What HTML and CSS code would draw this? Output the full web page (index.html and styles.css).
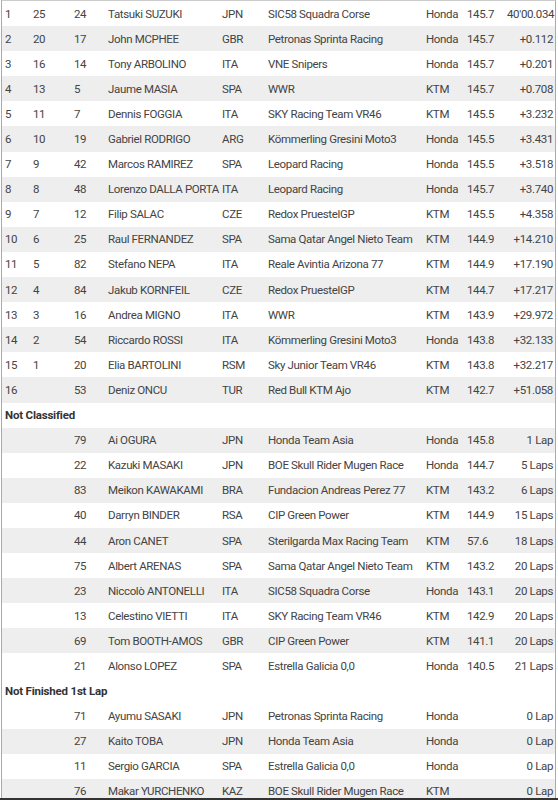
FILE: index.html
```html
<!DOCTYPE html>
<html>
<head>
<meta charset="utf-8">
<link rel="stylesheet" href="styles.css">
</head>
<body>
<div class="results">
  <div class="row"><span>1</span><span>25</span><span>24</span><span>Tatsuki SUZUKI</span><span>JPN</span><span>SIC58 Squadra Corse</span><span>Honda</span><span>145.7</span><span class="t">40'00.034</span></div>
  <div class="row"><span>2</span><span>20</span><span>17</span><span>John MCPHEE</span><span>GBR</span><span>Petronas Sprinta Racing</span><span>Honda</span><span>145.7</span><span class="t">+0.112</span></div>
  <div class="row"><span>3</span><span>16</span><span>14</span><span>Tony ARBOLINO</span><span>ITA</span><span>VNE Snipers</span><span>Honda</span><span>145.7</span><span class="t">+0.201</span></div>
  <div class="row"><span>4</span><span>13</span><span>5</span><span>Jaume MASIA</span><span>SPA</span><span>WWR</span><span>KTM</span><span>145.7</span><span class="t">+0.708</span></div>
  <div class="row"><span>5</span><span>11</span><span>7</span><span>Dennis FOGGIA</span><span>ITA</span><span>SKY Racing Team VR46</span><span>KTM</span><span>145.5</span><span class="t">+3.232</span></div>
  <div class="row"><span>6</span><span>10</span><span>19</span><span>Gabriel RODRIGO</span><span>ARG</span><span>Kömmerling Gresini Moto3</span><span>Honda</span><span>145.5</span><span class="t">+3.431</span></div>
  <div class="row"><span>7</span><span>9</span><span>42</span><span>Marcos RAMIREZ</span><span>SPA</span><span>Leopard Racing</span><span>Honda</span><span>145.5</span><span class="t">+3.518</span></div>
  <div class="row"><span>8</span><span>8</span><span>48</span><span>Lorenzo DALLA PORTA</span><span>ITA</span><span>Leopard Racing</span><span>Honda</span><span>145.7</span><span class="t">+3.740</span></div>
  <div class="row"><span>9</span><span>7</span><span>12</span><span>Filip SALAC</span><span>CZE</span><span>Redox PruestelGP</span><span>KTM</span><span>145.5</span><span class="t">+4.358</span></div>
  <div class="row"><span>10</span><span>6</span><span>25</span><span>Raul FERNANDEZ</span><span>SPA</span><span>Sama Qatar Angel Nieto Team</span><span>KTM</span><span>144.9</span><span class="t">+14.210</span></div>
  <div class="row"><span>11</span><span>5</span><span>82</span><span>Stefano NEPA</span><span>ITA</span><span>Reale Avintia Arizona 77</span><span>KTM</span><span>144.9</span><span class="t">+17.190</span></div>
  <div class="row"><span>12</span><span>4</span><span>84</span><span>Jakub KORNFEIL</span><span>CZE</span><span>Redox PruestelGP</span><span>KTM</span><span>144.7</span><span class="t">+17.217</span></div>
  <div class="row"><span>13</span><span>3</span><span>16</span><span>Andrea MIGNO</span><span>ITA</span><span>WWR</span><span>KTM</span><span>143.9</span><span class="t">+29.972</span></div>
  <div class="row"><span>14</span><span>2</span><span>54</span><span>Riccardo ROSSI</span><span>ITA</span><span>Kömmerling Gresini Moto3</span><span>Honda</span><span>143.8</span><span class="t">+32.133</span></div>
  <div class="row"><span>15</span><span>1</span><span>20</span><span>Elia BARTOLINI</span><span>RSM</span><span>Sky Junior Team VR46</span><span>KTM</span><span>143.8</span><span class="t">+32.217</span></div>
  <div class="row"><span>16</span><span></span><span>53</span><span>Deniz ONCU</span><span>TUR</span><span>Red Bull KTM Ajo</span><span>KTM</span><span>142.7</span><span class="t">+51.058</span></div>
  <div class="row head"><span class="title">Not Classified</span></div>
  <div class="row"><span></span><span></span><span>79</span><span>Ai OGURA</span><span>JPN</span><span>Honda Team Asia</span><span>Honda</span><span>145.8</span><span class="t">1 Lap</span></div>
  <div class="row"><span></span><span></span><span>22</span><span>Kazuki MASAKI</span><span>JPN</span><span>BOE Skull Rider Mugen Race</span><span>Honda</span><span>144.7</span><span class="t">5 Laps</span></div>
  <div class="row"><span></span><span></span><span>83</span><span>Meikon KAWAKAMI</span><span>BRA</span><span>Fundacion Andreas Perez 77</span><span>KTM</span><span>143.2</span><span class="t">6 Laps</span></div>
  <div class="row"><span></span><span></span><span>40</span><span>Darryn BINDER</span><span>RSA</span><span>CIP Green Power</span><span>KTM</span><span>144.9</span><span class="t">15 Laps</span></div>
  <div class="row"><span></span><span></span><span>44</span><span>Aron CANET</span><span>SPA</span><span>Sterilgarda Max Racing Team</span><span>KTM</span><span>57.6</span><span class="t">18 Laps</span></div>
  <div class="row"><span></span><span></span><span>75</span><span>Albert ARENAS</span><span>SPA</span><span>Sama Qatar Angel Nieto Team</span><span>KTM</span><span>143.2</span><span class="t">20 Laps</span></div>
  <div class="row"><span></span><span></span><span>23</span><span>Niccolò ANTONELLI</span><span>ITA</span><span>SIC58 Squadra Corse</span><span>Honda</span><span>143.1</span><span class="t">20 Laps</span></div>
  <div class="row"><span></span><span></span><span>13</span><span>Celestino VIETTI</span><span>ITA</span><span>SKY Racing Team VR46</span><span>KTM</span><span>142.9</span><span class="t">20 Laps</span></div>
  <div class="row"><span></span><span></span><span>69</span><span>Tom BOOTH-AMOS</span><span>GBR</span><span>CIP Green Power</span><span>KTM</span><span>141.1</span><span class="t">20 Laps</span></div>
  <div class="row"><span></span><span></span><span>21</span><span>Alonso LOPEZ</span><span>SPA</span><span>Estrella Galicia 0,0</span><span>Honda</span><span>140.5</span><span class="t">21 Laps</span></div>
  <div class="row head"><span class="title">Not Finished 1st Lap</span></div>
  <div class="row"><span></span><span></span><span>71</span><span>Ayumu SASAKI</span><span>JPN</span><span>Petronas Sprinta Racing</span><span>Honda</span><span></span><span class="t">0 Lap</span></div>
  <div class="row"><span></span><span></span><span>27</span><span>Kaito TOBA</span><span>JPN</span><span>Honda Team Asia</span><span>Honda</span><span></span><span class="t">0 Lap</span></div>
  <div class="row"><span></span><span></span><span>11</span><span>Sergio GARCIA</span><span>SPA</span><span>Estrella Galicia 0,0</span><span>Honda</span><span></span><span class="t">0 Lap</span></div>
  <div class="row"><span></span><span></span><span>76</span><span>Makar YURCHENKO</span><span>KAZ</span><span>BOE Skull Rider Mugen Race</span><span>KTM</span><span></span><span class="t">0 Lap</span></div>
</div>
<div class="edge"></div>
</body>
</html>
```

FILE: styles.css
```css
html, body {
  margin: 0;
  padding: 0;
  background: #fff;
}
body {
  height: 800px;
  overflow: hidden;
  font-family: "Roboto", "Liberation Sans", sans-serif;
  font-size: 11.5px;
  letter-spacing: -0.35px;
  color: #444;
}
.results {
  margin-left: 1px;
  width: 553px;
  border-left: 1px solid #aaa;
  border-right: 1px solid #aaa;
  border-top: 1px solid #ccc;
}
.row {
  display: grid;
  grid-template-columns: 28px 41px 34px 114px 46px 158px 41px 40px 1fr;
  align-items: center;
  height: 25.1px;
  padding: 0 2px 0 3px;
  white-space: nowrap;
}
.row:nth-child(even) {
  background: #eeeeee;
}
.row.head {
  background: #fff;
}
.row .t {
  justify-self: end;
}
.title {
  grid-column: 1 / -1;
  font-weight: bold;
  color: #333;
  letter-spacing: -0.2px;
}
.edge {
  position: fixed;
  left: 0;
  right: 0;
  bottom: 0;
  height: 2px;
  background: #333;
}
```
